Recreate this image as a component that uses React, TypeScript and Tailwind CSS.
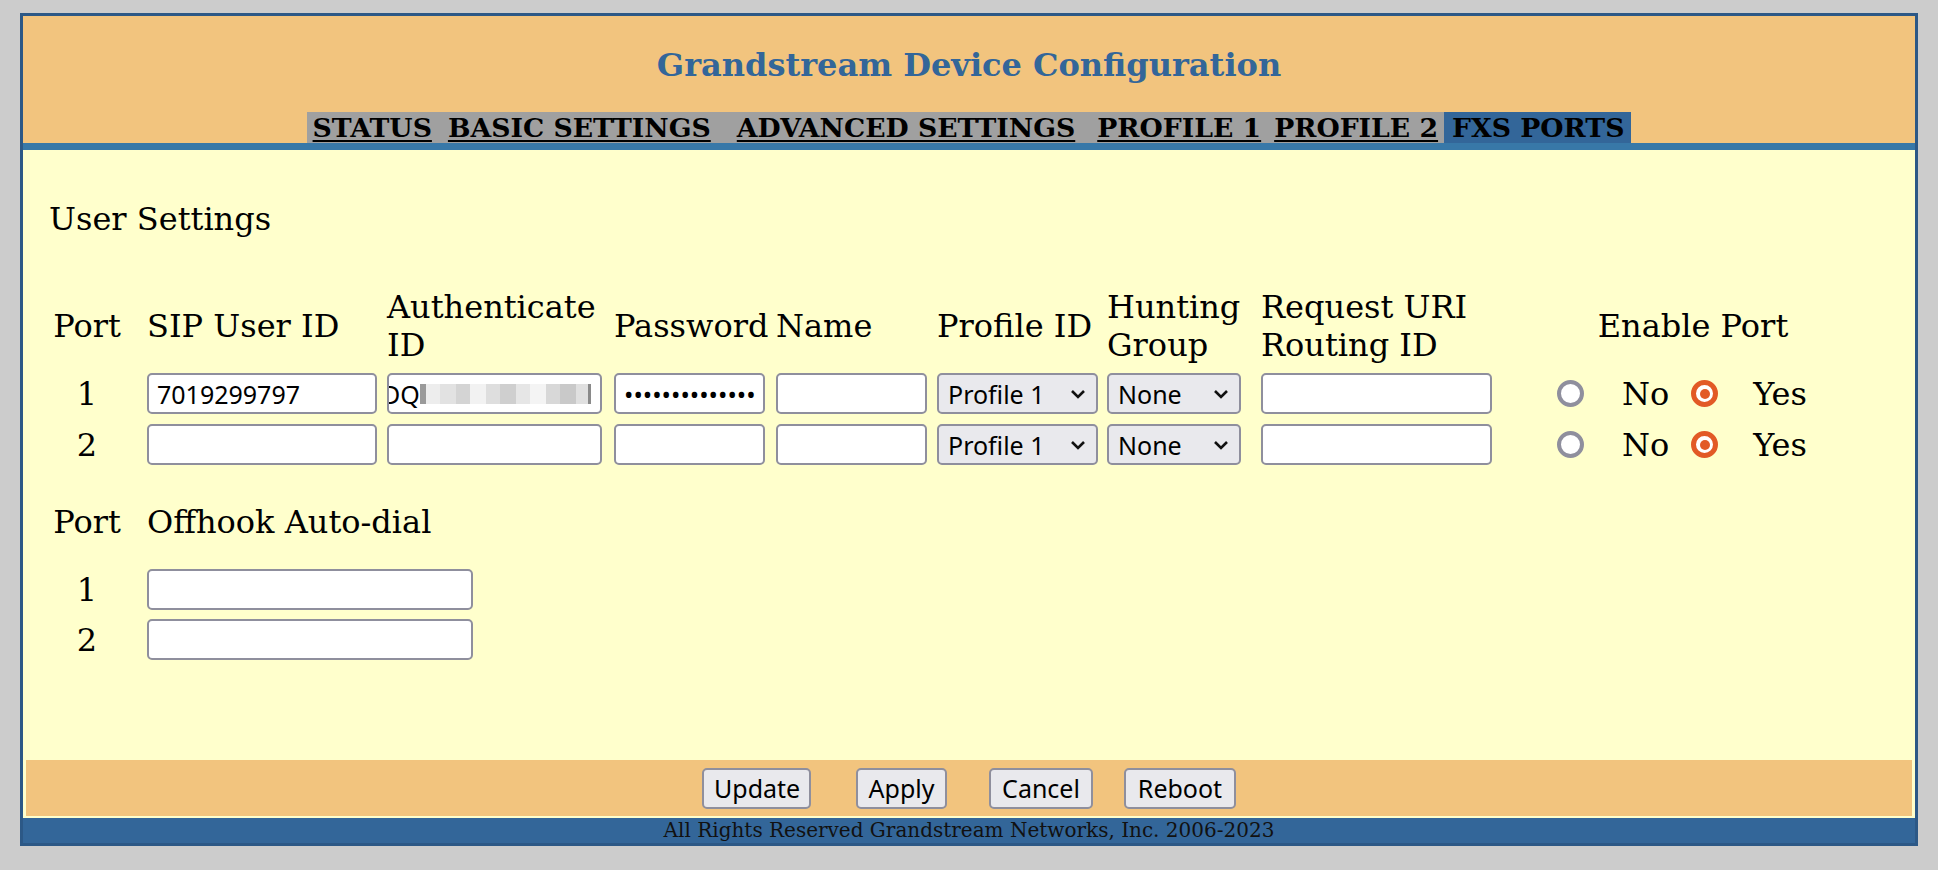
import { cva } from "class-variance-authority";

const FIELD_STYLE = cva(
  "h-[41px] rounded-[5px] border-2 border-[#8f8f9d] text-[25px] text-black font-['Noto_Sans',sans-serif] outline-none",
  {
    variants: {
      variant: {
        input: "bg-white px-[8px]",
        select: "appearance-none bg-[#e9e9ed] pl-[9px] pr-[30px]",
        button: "bg-[#e9e9ed] px-[10px] leading-none",
      },
    },
  },
);

const ROW = "grid grid-cols-[98px_240px_227px_162px_161px_170px_154px_279px_306px] items-center";
const PORT = "pr-[22px] text-center";

const TextField = ({ w, value, type }: { w: string; value?: string; type?: string }) => (
  <input
    type={type ?? "text"}
    defaultValue={value}
    className={`${FIELD_STYLE({ variant: "input" })} ${w}`}
  />
);

const Chevron = () => (
  <svg
    className="pointer-events-none absolute right-[12px] top-1/2 -translate-y-1/2"
    width="16"
    height="10"
    viewBox="0 0 16 10"
    fill="none"
  >
    <path d="M2 2l6 6 6-6" stroke="#111" strokeWidth="2.6" />
  </svg>
);

const Dropdown = ({ w, value }: { w: string; value: string }) => (
  <div className={`relative ${w}`}>
    <select defaultValue={value} className={`${FIELD_STYLE({ variant: "select" })} w-full`}>
      <option>{value}</option>
    </select>
    <Chevron />
  </div>
);

// blurred / pixelated auth id
const AuthIdBlurred = () => (
  <div className="flex h-[41px] w-[215px] items-center overflow-hidden rounded-[5px] border-2 border-[#8f8f9d] bg-white font-['Noto_Sans',sans-serif] text-[25px] text-black">
    <span className="-ml-[7px] shrink-0">DQ</span>
    <div className="flex h-[20px] shrink-0 items-stretch">
      <span className="w-[6px] bg-[#9a9a9a]" />
      <span className="w-[14px] bg-[#ededed]" />
      <span className="w-[16px] bg-[#e2e2e2]" />
      <span className="w-[14px] bg-[#d4d4d4]" />
      <span className="w-[16px] bg-[#f2f2f2]" />
      <span className="w-[14px] bg-[#dedede]" />
      <span className="w-[16px] bg-[#cfcfcf]" />
      <span className="w-[14px] bg-[#e6e6e6]" />
      <span className="w-[16px] bg-[#f4f4f4]" />
      <span className="w-[14px] bg-[#d8d8d8]" />
      <span className="w-[16px] bg-[#c9c9c9]" />
      <span className="w-[12px] bg-[#e0e0e0]" />
      <span className="w-[3px] bg-[#8a8a8a]" />
    </div>
  </div>
);

const Radio = ({ checked }: { checked?: boolean }) =>
  checked ? (
    <span className="inline-flex size-[27px] items-center justify-center rounded-full border-[5px] border-[#e25a26] bg-white">
      <span className="size-[10px] rounded-full bg-[#e25a26]" />
    </span>
  ) : (
    <span className="inline-block size-[27px] rounded-full border-[4px] border-[#8f8f9d] bg-white" />
  );

const EnablePort = () => (
  <div className="flex items-center pl-[17px]">
    <Radio />
    <span className="ml-[38px]">No</span>
    <span className="ml-[22px] flex">
      <Radio checked />
    </span>
    <span className="ml-[35px]">Yes</span>
  </div>
);

const NAV = [
  { label: "STATUS", cls: "pl-[6px] pr-[8px]" },
  { label: "BASIC SETTINGS", cls: "pl-[8px] pr-[12px]" },
  { label: "ADVANCED SETTINGS", cls: "pl-[14px] pr-[11px]" },
  { label: "PROFILE 1", cls: "pl-[11px] pr-[6px]" },
  { label: "PROFILE 2", cls: "pl-[7px] pr-[6px]" },
];

const App = () => {
  return (
    <div className="min-h-screen bg-[#cccccc] px-[20px] pt-[13px] font-['DejaVu_Serif',serif] text-black">
      <div className="border-[3px] border-[#2c5886] bg-[#ffffcc]">
        {/* Header */}
        <header className="flex h-[134px] flex-col items-center border-b-[7px] border-[#3878a8] bg-[#f2c47e]">
          <h1 className="mt-[31px] text-[32px] font-bold leading-[36px] text-[#336699]">
            Grandstream Device Configuration
          </h1>
          <nav className="mt-auto flex h-[31px] text-[26.7px] font-bold leading-[31px]">
            {NAV.map((n) => (
              <span key={n.label} className={`bg-[#a0a0a0] ${n.cls}`}>
                <a className="underline decoration-2 underline-offset-[3px]">{n.label}</a>
              </span>
            ))}
            <span className="bg-[#336699] pl-[8px] pr-[7px]">FXS PORTS</span>
          </nav>
        </header>

        {/* User settings */}
        <main className="pl-[26px] text-[32px] leading-[38px]">
          <h2 className="pt-[50px]">User Settings</h2>

          <div className={`${ROW} mt-[50px] h-[76px]`}>
            <span className={PORT}>Port</span>
            <span>SIP User ID</span>
            <span>
              Authenticate
              <br />
              ID
            </span>
            <span>Password</span>
            <span>Name</span>
            <span>Profile ID</span>
            <span>
              Hunting
              <br />
              Group
            </span>
            <span>
              Request URI
              <br />
              Routing ID
            </span>
            <span className="text-center">Enable Port</span>
          </div>

          <div className={`${ROW} mt-[9px]`}>
            <span className={PORT}>1</span>
            <TextField w="w-[230px]" value="7019299797" />
            <AuthIdBlurred />
            <TextField w="w-[151px]" type="password" value="abcdefghijklmn" />
            <TextField w="w-[151px]" />
            <Dropdown w="w-[161px]" value="Profile 1" />
            <Dropdown w="w-[134px]" value="None" />
            <TextField w="w-[231px]" />
            <EnablePort />
          </div>

          <div className={`${ROW} mt-[10px]`}>
            <span className={PORT}>2</span>
            <TextField w="w-[230px]" />
            <TextField w="w-[215px]" />
            <TextField w="w-[151px]" />
            <TextField w="w-[151px]" />
            <Dropdown w="w-[161px]" value="Profile 1" />
            <Dropdown w="w-[134px]" value="None" />
            <TextField w="w-[231px]" />
            <EnablePort />
          </div>

          {/* Offhook auto-dial */}
          <div className="mt-[38px] grid grid-cols-[98px_1fr] items-center">
            <span className={PORT}>Port</span>
            <span>Offhook Auto-dial</span>
          </div>
          <div className="mt-[28px] grid grid-cols-[98px_1fr] items-center">
            <span className={PORT}>1</span>
            <TextField w="w-[326px]" />
          </div>
          <div className="mt-[9px] grid grid-cols-[98px_1fr] items-center">
            <span className={PORT}>2</span>
            <TextField w="w-[326px]" />
          </div>
        </main>

        {/* Actions */}
        <div className="mx-[3px] mt-[100px] mb-[2px] flex h-[56px] items-center justify-center bg-[#f2c47e]">
          <button className={`${FIELD_STYLE({ variant: "button" })} w-[109px]`}>Update</button>
          <button className={`${FIELD_STYLE({ variant: "button" })} ml-[45px] w-[91px]`}>Apply</button>
          <button className={`${FIELD_STYLE({ variant: "button" })} ml-[42px] w-[104px]`}>Cancel</button>
          <button className={`${FIELD_STYLE({ variant: "button" })} ml-[31px] w-[112px]`}>Reboot</button>
        </div>

        <footer className="h-[25px] bg-[#336699] text-center text-[20px] leading-[25px] text-[#111]">
          All Rights Reserved Grandstream Networks, Inc. 2006-2023
        </footer>
      </div>
    </div>
  );
};

export default App;
